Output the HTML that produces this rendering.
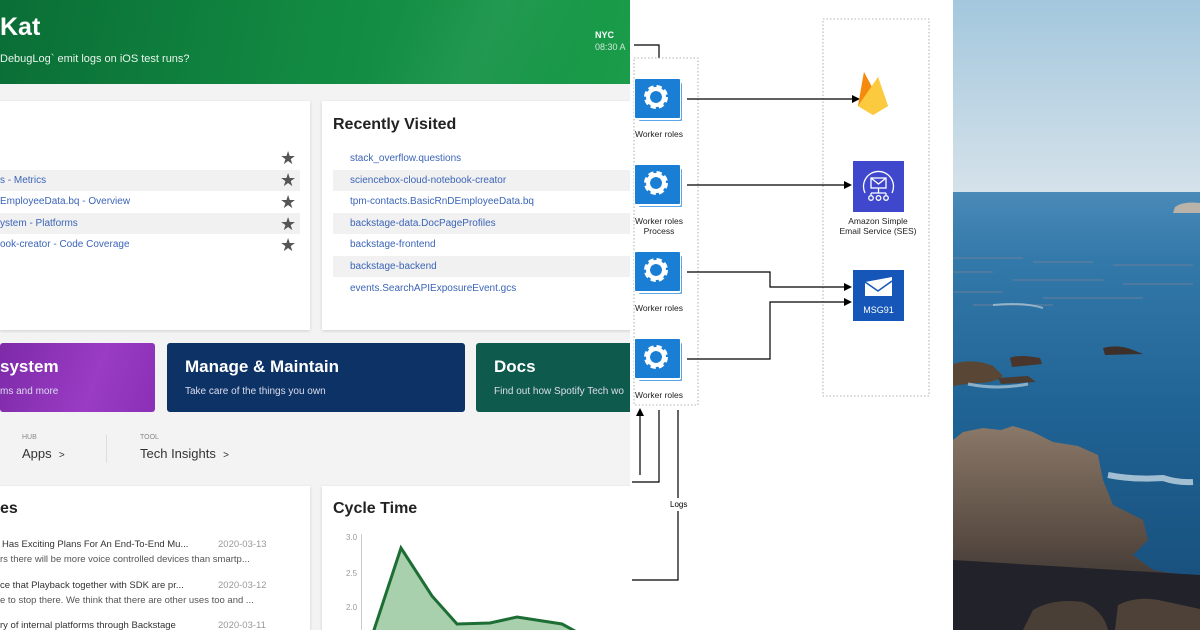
<!DOCTYPE html>
<html><head><meta charset="utf-8"><style>
*{margin:0;padding:0;box-sizing:border-box}
body{width:1200px;height:630px;overflow:hidden;position:relative;font-family:"Liberation Sans",sans-serif;background:#fff}
.a{position:absolute}
#L{left:0;top:0;width:630px;height:630px;background:#f3f3f3;overflow:hidden}
.hdr{left:0;top:0;width:630px;height:84px;background:linear-gradient(100deg,#0a6e36 0%,#128a42 50%,#1a9c4a 100%)}
.card{background:#fff;box-shadow:0 1px 3px rgba(0,0,0,.15)}
.lk{color:#3b64b8;font-size:10px}
.row{position:absolute;height:21px;background:#f1f1f1}
.star{position:absolute;font-size:18px;color:#555;left:280px}
.tile{color:#fff}
.tile b{position:absolute;font-size:17px;top:14px}
.tile span{position:absolute;font-size:10px;top:43px;color:#dde}
#M{left:630px;top:0;width:323px;height:630px;background:#fff}
.wr{position:absolute;width:50px;height:44px}
.wr div{position:absolute;background:#1a7fd4;border:1px solid #fff;border-radius:2px}
.cap{position:absolute;font-size:8.5px;color:#222;text-align:center;width:70px}
#R{left:953px;top:0;width:247px;height:630px;overflow:hidden}
</style></head><body>
<div id="L" class="a">
 <div class="a hdr"></div>
 <div class="a" style="left:0;top:0;width:630px;height:84px;background:linear-gradient(115deg,transparent 60%,rgba(255,255,255,.05) 75%,transparent 90%)"></div>
 <div class="a" style="left:0;top:13px;color:#fff;font-size:25px;font-weight:bold">Kat</div>
 <div class="a" style="left:0;top:53px;color:#e8f4ec;font-size:11px">DebugLog` emit logs on iOS test runs?</div>
 <div class="a" style="left:595px;top:30px;color:#fff;font-size:9px;font-weight:bold">NYC</div>
 <div class="a" style="left:595px;top:42px;color:#cfe8d8;font-size:9px">08:30 A</div>

 <div class="a card" style="left:0;top:101px;width:310px;height:229px">
  <div class="row" style="left:0;top:69px;width:300px"></div>
  <div class="row" style="left:0;top:112px;width:300px"></div>
  <div class="a lk" style="left:0;top:74px">s - Metrics</div>
  <div class="a lk" style="left:0;top:95px">EmployeeData.bq - Overview</div>
  <div class="a lk" style="left:0;top:117px">ystem - Platforms</div>
  <div class="a lk" style="left:0;top:138px">ook-creator - Code Coverage</div>
  <div class="star" style="top:47px">★</div><div class="star" style="top:69px">★</div><div class="star" style="top:91px">★</div><div class="star" style="top:113px">★</div><div class="star" style="top:134px">★</div>
 </div>
 <div class="a card" style="left:322px;top:101px;width:320px;height:229px">
  <div class="a" style="left:11px;top:15px;font-size:16px;font-weight:bold;color:#222">Recently Visited</div>
  <div class="row" style="left:11px;top:69px;width:300px"></div>
  <div class="row" style="left:11px;top:112px;width:300px"></div>
  <div class="row" style="left:11px;top:155px;width:300px"></div>
  <div class="a lk" style="left:28px;top:52px">stack_overflow.questions</div>
  <div class="a lk" style="left:28px;top:74px">sciencebox-cloud-notebook-creator</div>
  <div class="a lk" style="left:28px;top:95px">tpm-contacts.BasicRnDEmployeeData.bq</div>
  <div class="a lk" style="left:28px;top:117px">backstage-data.DocPageProfiles</div>
  <div class="a lk" style="left:28px;top:138px">backstage-frontend</div>
  <div class="a lk" style="left:28px;top:160px">backstage-backend</div>
  <div class="a lk" style="left:28px;top:182px">events.SearchAPIExposureEvent.gcs</div>
 </div>

 <div class="a tile" style="left:0;top:343px;width:155px;height:69px;background:linear-gradient(110deg,#7d2aa8,#9a3cc4 60%,#8a30b6);border-radius:3px"><b style="left:0">system</b><span style="left:0">ms and more</span></div>
 <div class="a tile" style="left:167px;top:343px;width:298px;height:69px;background:#0d3366;border-radius:3px"><b style="left:18px">Manage &amp; Maintain</b><span style="left:18px">Take care of the things you own</span></div>
 <div class="a tile" style="left:476px;top:343px;width:170px;height:69px;background:#0e5a4c;border-radius:3px"><b style="left:18px">Docs</b><span style="left:18px">Find out how Spotify Tech wo</span></div>

 <div class="a" style="left:22px;top:434px;font-size:7px;color:#888">HUB</div>
 <div class="a" style="left:22px;top:446px;font-size:13px;color:#333">Apps &nbsp;<span style="font-size:10px">&gt;</span></div>
 <div class="a" style="left:106px;top:435px;width:1px;height:28px;background:#ddd"></div>
 <div class="a" style="left:140px;top:434px;font-size:7px;color:#888">TOOL</div>
 <div class="a" style="left:140px;top:446px;font-size:13px;color:#333">Tech Insights &nbsp;<span style="font-size:10px">&gt;</span></div>

 <div class="a card" style="left:0;top:486px;width:310px;height:150px">
  <div class="a" style="left:0;top:14px;font-size:16px;font-weight:bold;color:#222">es</div>
  <div class="a" style="left:2px;top:53px;font-size:9.5px;color:#333">Has Exciting Plans For An End-To-End Mu...</div>
  <div class="a" style="left:218px;top:53px;font-size:9.5px;color:#999">2020-03-13</div>
  <div class="a" style="left:0;top:68px;font-size:9.5px;color:#555">rs there will be more voice controlled devices than smartp...</div>
  <div class="a" style="left:0;top:94px;font-size:9.5px;color:#333">ce that Playback together with SDK are pr...</div>
  <div class="a" style="left:218px;top:94px;font-size:9.5px;color:#999">2020-03-12</div>
  <div class="a" style="left:0;top:109px;font-size:9.5px;color:#555">e to stop there. We think that there are other uses too and ...</div>
  <div class="a" style="left:0;top:134px;font-size:9.5px;color:#333">ry of internal platforms through Backstage</div>
  <div class="a" style="left:218px;top:134px;font-size:9.5px;color:#999">2020-03-11</div>
 </div>
 <div class="a card" style="left:322px;top:486px;width:320px;height:150px">
  <div class="a" style="left:11px;top:14px;font-size:16px;font-weight:bold;color:#222">Cycle Time</div>
  <div class="a" style="left:24px;top:47px;font-size:8px;color:#999">3.0</div>
  <div class="a" style="left:24px;top:83px;font-size:8px;color:#999">2.5</div>
  <div class="a" style="left:24px;top:117px;font-size:8px;color:#999">2.0</div>
  <div class="a" style="left:39px;top:48px;width:1px;height:100px;background:#ccc"></div>
  <svg class="a" style="left:0;top:0" width="320" height="150"><polygon points="50,150 79,62 110,110 135,138 168,137 195,131 240,138 262,150" fill="#a8d0ac" stroke="#1d6e35" stroke-width="3"/></svg>
 </div>
</div>

<div id="M" class="a">
 <svg class="a" style="left:0;top:0" width="323" height="630" fill="none" stroke="#000" stroke-width="1.2">
  <path d="M4 45H29V58"/>
  <rect x="4" y="58" width="64" height="347" stroke="#999" stroke-dasharray="1.5,2" stroke-width="0.8"/>
  <rect x="193" y="19" width="106" height="377" stroke="#999" stroke-dasharray="1.5,2" stroke-width="0.8"/>
  <path d="M57 99H225"/><path d="M57 185H215"/>
  <path d="M57 272H140V287H215"/><path d="M57 359H140V302H215"/>
  <path d="M10 475V412"/><path d="M29 410V482H2"/><path d="M48 410V580H2"/>
  <g fill="#000" stroke="none"><path d="M230 99l-8-4v8z"/><path d="M222 185l-8-4v8z"/><path d="M222 287l-8-4v8z"/><path d="M222 302l-8-4v8z"/><path d="M10 408l-4 8h8z"/></g>
 </svg>
 <div class="a" style="left:38px;top:498px;font-size:8px;background:#fff;padding:2px">Logs</div>
 <div class="wr" style="left:4px;top:78px"><div style="left:4px;top:4px;width:45px;height:40px;background:#5aa6e6"></div><div style="left:2px;top:2px;width:45px;height:40px;background:#3c93dd"></div><div style="left:0;top:0;width:47px;height:41px"></div></div>
 <div class="wr" style="left:4px;top:164px"><div style="left:4px;top:4px;width:45px;height:40px;background:#5aa6e6"></div><div style="left:2px;top:2px;width:45px;height:40px;background:#3c93dd"></div><div style="left:0;top:0;width:47px;height:41px"></div></div>
 <div class="wr" style="left:4px;top:251px"><div style="left:4px;top:4px;width:45px;height:40px;background:#5aa6e6"></div><div style="left:2px;top:2px;width:45px;height:40px;background:#3c93dd"></div><div style="left:0;top:0;width:47px;height:41px"></div></div>
 <div class="wr" style="left:4px;top:338px"><div style="left:4px;top:4px;width:45px;height:40px;background:#5aa6e6"></div><div style="left:2px;top:2px;width:45px;height:40px;background:#3c93dd"></div><div style="left:0;top:0;width:47px;height:41px"></div></div>
 <svg class="a" style="left:0;top:0" width="80" height="400">
  <defs><g id="g"><circle r="9" fill="none" stroke="#fff" stroke-width="6" stroke-dasharray="4.5,2.6"/><circle r="8" fill="none" stroke="#fff" stroke-width="4"/><circle r="3" fill="#1a7fd4"/></g></defs>
  <use href="#g" x="26" y="97"/><use href="#g" x="26" y="183"/><use href="#g" x="26" y="270"/><use href="#g" x="26" y="357"/>
 </svg>
 <div class="cap" style="left:-6px;top:129px">Worker roles</div>
 <div class="cap" style="left:-6px;top:216px">Worker roles<br>Process</div>
 <div class="cap" style="left:-6px;top:303px">Worker roles</div>
 <div class="cap" style="left:-6px;top:390px">Worker roles</div>
 <svg class="a" style="left:225px;top:72px" width="36" height="46"><path d="M3 34L9 0l8 15 6-10 10 29-15 9z" fill="#f8a825"/><path d="M3 34L9 0l10 19z" fill="#f58a0f"/><path d="M3 34l20-29 10 29-15 9z" fill="#fcca3f"/></svg>
 <div class="a" style="left:223px;top:161px;width:51px;height:51px;background:#3f48cc"></div>
 <svg class="a" style="left:223px;top:161px" width="51" height="51" fill="none" stroke="#fff" stroke-width="1.3"><path d="M12 32A15 15 0 1 1 39 32"/><rect x="18" y="17" width="15" height="10"/><path d="M18 17l7.5 6 7.5-6M25.5 27v5M18 32h15M18 32v2M33 32v2"/><circle cx="18" cy="37" r="2.3"/><circle cx="25.5" cy="37" r="2.3"/><circle cx="33" cy="37" r="2.3"/></svg>
 <div class="a" style="left:198px;top:216px;width:100px;text-align:center;font-size:8.5px;line-height:10px;color:#222">Amazon Simple<br>Email Service (SES)</div>
 <div class="a" style="left:223px;top:270px;width:51px;height:51px;background:#1556b8"></div>
 <svg class="a" style="left:223px;top:270px" width="51" height="51"><path d="M12 12L39 7V26H12z" fill="#fff"/><path d="M12 12l13 9 14-10" stroke="#1556b8" stroke-width="1.5" fill="none"/></svg>
 <div class="a" style="left:223px;top:305px;width:51px;text-align:center;font-size:9px;color:#fff">MSG91</div>
</div>

<div id="R" class="a">
 <svg width="247" height="630">
  <defs>
   <linearGradient id="sky" x1="0" y1="0" x2="0" y2="1"><stop offset="0" stop-color="#a3c7dd"/><stop offset="1" stop-color="#d5e2ea"/></linearGradient>
   <linearGradient id="sea" x1="0" y1="0" x2="0" y2="1"><stop offset="0" stop-color="#4a8ab8"/><stop offset=".15" stop-color="#3379aa"/><stop offset=".5" stop-color="#1f6394"/><stop offset="1" stop-color="#174c78"/></linearGradient>
   <linearGradient id="rock" x1="0" y1="0" x2="0" y2="1"><stop offset="0" stop-color="#8a7868"/><stop offset=".5" stop-color="#5e5046"/><stop offset="1" stop-color="#2a2728"/></linearGradient>
  </defs>
  <rect width="247" height="193" fill="url(#sky)"/>
  <rect y="192" width="247" height="438" fill="url(#sea)"/>
  <g stroke="#6a7f9c" stroke-width="2" opacity=".5"><path d="M0 258h70M80 262h60M160 265h80M0 272h40M60 280h90M170 284h70M0 292h50M90 298h100M20 305h80"/></g>
  <path d="M40 305q30-3 50 3" stroke="#c8dbe6" stroke-width="2" fill="none" opacity=".6"/>
  <path d="M222 207q8-6 25-4v10h-27z" fill="#b9b3aa"/>
  <path d="M0 364q20-6 40 2l10 10q-10 8-30 7l-20 3z" fill="#5a4634"/>
  <path d="M57 358q8-4 30 0l2 6-30 3z" fill="#4a352c"/>
  <path d="M45 378l30-2 8 6-35 2z" fill="#4a3a30"/>
  <path d="M150 348q15-4 30 2l10 4-38 1z" fill="#3d302a"/>
  <path d="M15 384q30 6 60 0" stroke="#cfe0ea" stroke-width="3" fill="none" opacity=".6"/>
  <path d="M155 475q25 5 55 3q15 5 30 4" stroke="#dbe8ef" stroke-width="6" fill="none" opacity=".7"/>
  <path d="M0 440L10 432 30 428 48 430 60 426 80 432 100 442 125 446 145 455 150 480 160 505 190 520 195 540 180 555 200 570 247 578V630H0z" fill="url(#rock)"/>
  <path d="M0 560L247 575V630H0z" fill="#22232a"/>
  <path d="M80 610q20-12 50-8q20 8 25 28H70z" fill="#4a3f36"/>
  <path d="M165 605q20-10 45-4l37 8v21h-85z" fill="#4e4238"/>
 </svg>
</div>
</body></html>
